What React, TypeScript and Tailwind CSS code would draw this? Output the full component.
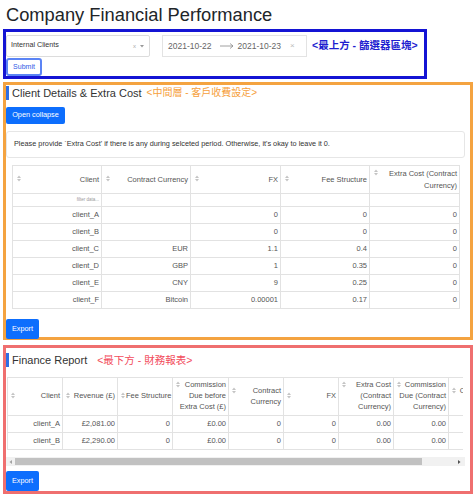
import React from "react";

const SortIcon = () => (
  <svg width="4" height="7" viewBox="0 0 4 7" className="float-left mt-[1px] mr-[1px]">
    <path d="M0 3 L2 0.6 L4 3 Z" fill="#c4c4c4" />
    <path d="M0 4 L2 6.4 L4 4 Z" fill="#c4c4c4" />
  </svg>
);

const clientRows = [
  ["client_A", "", "0", "0", "0"],
  ["client_B", "", "0", "0", "0"],
  ["client_C", "EUR", "1.1", "0.4", "0"],
  ["client_D", "GBP", "1", "0.35", "0"],
  ["client_E", "CNY", "9", "0.25", "0"],
  ["client_F", "Bitcoin", "0.00001", "0.17", "0"],
];

const clientHeaders = ["Client", "Contract Currency", "FX", "Fee Structure", "Extra Cost (Contract Currency)"];
const clientWidths = [89, 89, 90, 89, 90];

const finHeaders = [
  "Client",
  "Revenue (£)",
  "Fee Structure",
  "Commission Due before Extra Cost (£)",
  "Contract Currency",
  "FX",
  "Extra Cost (Contract Currency)",
  "Commission Due (Contract Currency)",
  "Commission Due (£)",
];
const finWidths = [55, 55, 55, 56, 55, 55, 55, 55, 55];
const finRows = [
  ["client_A", "£2,081.00", "0", "£0.00", "0", "0", "0.00", "0.00", "£0.00"],
  ["client_B", "£2,290.00", "0", "£0.00", "0", "0", "0.00", "0.00", "£0.00"],
];

function Heading({ text, label, labelClass, gap }: { text: string; label: string; labelClass: string; gap: string }) {
  return (
    <div className="flex items-center h-[14px]">
      <div className="w-[3px] h-full bg-[#2f6fe3]" />
      <span className="ml-[3px] text-[11px] leading-[14px] text-[#333]">{text}</span>
      <span className={`${gap} leading-[14px] font-['Liberation_Sans','Noto_Sans_CJK_TC',sans-serif] ${labelClass}`}>{label}</span>
    </div>
  );
}

function BlueButton({ text, w, h }: { text: string; w: string; h: string }) {
  return (
    <div className={`${w} ${h} bg-[#0d6efd] rounded-[2px] text-white text-[7.3px] flex items-center justify-center`}>
      {text}
    </div>
  );
}

export default function App() {
  return (
    <div className="w-[474px] h-[495px] overflow-hidden bg-white pl-[3px] font-['Liberation_Sans',Arial,'Noto_Sans_CJK_TC',sans-serif] text-[#212529]">
      <div className="h-[29px] pl-[3px] pt-[1px] text-[18.3px] leading-[28px]">Company Financial Performance</div>

      {/* Filter block */}
      <div className="w-[424px] h-[50px] border-[3px] border-[#1414d4]">
        <div className="flex items-start pt-[3px]">
          <div className="w-[144px] h-[22px] border border-[#dcdcdc] rounded-[2px] flex items-start justify-between pl-[4px] pr-[5px] pt-[4px]">
            <span className="text-[7.2px] leading-[9px] text-[#333]">Internal Clients</span>
            <span className="flex items-center gap-[4px] mt-[2px] text-[#aaa] text-[6px] leading-[8px]">
              <span>x</span>
              <svg width="4" height="3" viewBox="0 0 4 3"><path d="M0 0 L4 0 L2 2.5 Z" fill="#999" /></svg>
            </span>
          </div>
          <div className="ml-[12px] w-[145px] h-[22px] border border-[#e3e3e3] flex items-center pl-[5px] text-[8.5px] text-[#666]">
            <span>2021-10-22</span>
            <svg width="14" height="6" viewBox="0 0 14 6" className="ml-[9px]">
              <path d="M0 3 H13 M10 0.5 L13 3 L10 5.5" stroke="#888" strokeWidth="0.8" fill="none" />
            </svg>
            <span className="ml-[3px]">2021-10-23</span>
            <span className="ml-[9px] text-[#bbb] text-[8px]">×</span>
          </div>
          <span className="ml-[5px] self-center text-[10.5px] font-bold text-[#1f1fd0] font-['Liberation_Sans','Noto_Sans_CJK_TC',sans-serif]">
            {"<最上方 - 篩選器區塊>"}
          </span>
        </div>
        <div className="mt-[1px] w-[36px] h-[18px] border-2 border-[#5b84f5] rounded-[3px] text-[#2e5ae6] text-[7px] flex items-center justify-center">
          Submit
        </div>
      </div>

      {/* Client details block */}
      <div className="mt-[3px] w-[470px] h-[258px] border-[3px] border-[#f4a340] pr-[3px]">
        <div className="mt-[1px]">
          <Heading text="Client Details & Extra Cost" label="<中間層 - 客戶收費設定>" labelClass="text-[#f6a03c] text-[10px]" gap="ml-[5px]" />
        </div>
        <div className="mt-[7px]">
          <BlueButton text="Open collapse" w="w-[59px]" h="h-[17px]" />
        </div>
        <div className="mt-[7px] w-[459px] h-[27px] border border-[#e6e6e6] rounded-[3px] flex items-center pl-[7px] text-[7.3px] text-[#333]">
          Please provide `Extra Cost' if there is any during selceted period. Otherwise, it's okay to leave it 0.
        </div>
        <div className="mt-[7px] ml-[6px]">
          <table className="table-fixed border-collapse text-[7.5px] text-[#555]" style={{ width: 447 }}>
            <colgroup>
              {clientWidths.map((w, i) => (
                <col key={i} style={{ width: w }} />
              ))}
            </colgroup>
            <thead>
              <tr className="h-[28px]">
                {clientHeaders.map((h) => (
                  <th key={h} className="border border-[#e2e2e2] font-normal text-right align-middle pl-[4px] pr-[2px] leading-[12px]">
                    <SortIcon />
                    {h}
                  </th>
                ))}
              </tr>
              <tr className="h-[13px]">
                <td className="border border-[#e2e2e2] text-right pr-[2px] text-[4.5px] text-[#999]">filter data...</td>
                <td className="border border-[#e2e2e2]" />
                <td className="border border-[#e2e2e2]" />
                <td className="border border-[#e2e2e2]" />
                <td className="border border-[#e2e2e2]" />
              </tr>
            </thead>
            <tbody>
              {clientRows.map((r) => (
                <tr key={r[0]} className="h-[17px]">
                  {r.map((c, i) => (
                    <td key={i} className="border border-[#e2e2e2] text-right pr-[2px] align-middle">
                      {c}
                    </td>
                  ))}
                </tr>
              ))}
            </tbody>
          </table>
        </div>
        <div className="mt-[10px]">
          <BlueButton text="Export" w="w-[33px]" h="h-[20px]" />
        </div>
      </div>

      {/* Finance report block */}
      <div className="mt-[5px] w-[470px] h-[149px] border-[3px] border-[#ef6f6f]">
        <div className="mt-[5px]">
          <Heading text="Finance Report" label="<最下方 - 財務報表>" labelClass="text-[#f24c5c] text-[10.5px]" gap="ml-[10px]" />
        </div>
        <div className="mt-[10px] ml-[1px] w-[456px] overflow-hidden">
          <table className="table-fixed border-collapse text-[7.5px] text-[#555]" style={{ width: 496 }}>
            <colgroup>
              {finWidths.map((w, i) => (
                <col key={i} style={{ width: w }} />
              ))}
            </colgroup>
            <thead>
              <tr className="h-[38px]">
                {finHeaders.map((h) => (
                  <th
                    key={h}
                    className={`border border-[#e2e2e2] font-normal text-right align-middle pl-[3px] pr-[2px] leading-[10.7px] ${h === "Fee Structure" ? "whitespace-nowrap" : ""}`}
                  >
                    <SortIcon />
                    {h}
                  </th>
                ))}
              </tr>
            </thead>
            <tbody>
              {finRows.map((r) => (
                <tr key={r[0]} className="h-[17px]">
                  {r.map((c, i) => (
                    <td key={i} className="border border-[#e2e2e2] text-right pr-[2px] align-middle whitespace-nowrap">
                      {c}
                    </td>
                  ))}
                </tr>
              ))}
            </tbody>
          </table>
        </div>
        <div className="mt-[7px] w-[459px] h-[9px] bg-[#f1f1f1] flex items-center">
          <svg width="6" height="6" viewBox="0 0 6 6" className="ml-[2px]"><path d="M4 1 L1.5 3 L4 5 Z" fill="#a3a3a3" /></svg>
          <div className="ml-[1px] w-[407px] h-[7px] bg-[#c1c1c1]" />
          <div className="flex-1" />
          <svg width="6" height="6" viewBox="0 0 6 6" className="mr-[3px]"><path d="M2 1 L4.5 3 L2 5 Z" fill="#505050" /></svg>
        </div>
        <div className="mt-[5px]">
          <BlueButton text="Export" w="w-[33px]" h="h-[20px]" />
        </div>
      </div>
    </div>
  );
}
